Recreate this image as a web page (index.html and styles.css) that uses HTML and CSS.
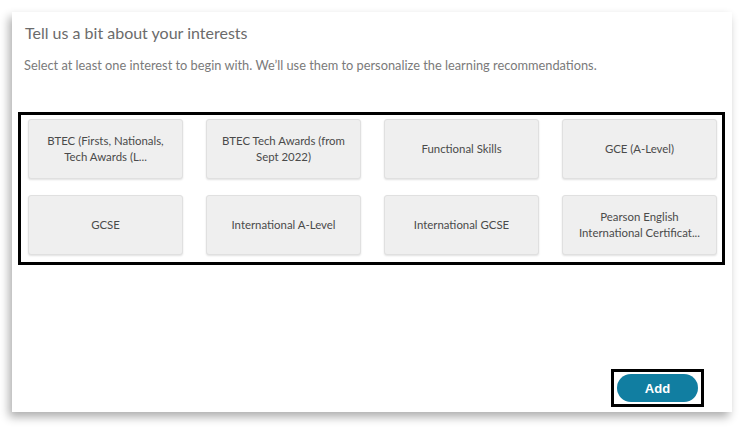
FILE: index.html
```html
<!DOCTYPE html>
<html lang="en">
<head>
<meta charset="utf-8">
<link rel="stylesheet" href="styles.css">
</head>
<body>
<div class="card">
  <h1 class="title">Tell us a bit about your interests</h1>
  <p class="subtitle">Select at least one interest to begin with. We’ll use them to personalize the learning recommendations.</p>
  <div class="grid-box">
    <div class="tile">BTEC (Firsts, Nationals, Tech Awards (L...</div>
    <div class="tile">BTEC Tech Awards (from Sept 2022)</div>
    <div class="tile">Functional Skills</div>
    <div class="tile">GCE (A-Level)</div>
    <div class="tile">GCSE</div>
    <div class="tile">International A-Level</div>
    <div class="tile">International GCSE</div>
    <div class="tile">Pearson English International Certificat...</div>
  </div>
  <div class="footer">
    <div class="add-frame"><button class="add-btn">Add</button></div>
  </div>
</div>
</body>
</html>
```
FILE: styles.css
```css
html, body {
  margin: 0;
  padding: 0;
  background: #ffffff;
}
body {
  font-family: "Lato", "Open Sans", sans-serif;
  min-height: 430px;
  padding: 12px 0 18px 12px;
  box-sizing: border-box;
}
.card {
  width: 720px;
  height: 400px;
  box-sizing: border-box;
  background: #ffffff;
  box-shadow: -3px 5px 9px rgba(0,0,0,0.32);
  display: flex;
  flex-direction: column;
}
.title {
  margin: 10px 0 0 13px;
  font-size: 16px;
  font-weight: 400;
  color: #6b6b6b;
  line-height: 22px;
}
.subtitle {
  margin: 12px 0 0 12px;
  font-size: 12.8px;
  color: #7a7a7a;
  line-height: 18px;
}
.grid-box {
  margin: 38px 0 0 6px;
  width: 707px;
  height: 153px;
  box-sizing: border-box;
  border: 3px solid #000000;
  padding: 4px 0 0 7px;
  display: grid;
  grid-template-columns: repeat(4, 155px);
  grid-auto-rows: 60px;
  column-gap: 23px;
  row-gap: 16px;
}
.tile {
  background: #efefef;
  border: 1px solid #e0e0e0;
  border-radius: 3px;
  box-shadow: 0 1px 2px rgba(0,0,0,0.12);
  display: flex;
  align-items: center;
  justify-content: center;
  text-align: center;
  padding: 0 9px;
  font-size: 11.4px;
  line-height: 16px;
  color: #4a4a4a;
  box-sizing: border-box;
}
.footer {
  margin-top: auto;
  display: flex;
  justify-content: flex-end;
  padding: 0 28px 5px 0;
}
.add-frame {
  border: 3px solid #000000;
  padding: 2px 3px;
  display: flex;
  background: #ffffff;
}
.add-btn {
  width: 81px;
  height: 28px;
  border: none;
  border-radius: 14px;
  background: #117ea1;
  color: #ffffff;
  font-family: "Liberation Sans", Arial, sans-serif;
  font-weight: 700;
  font-size: 13px;
  padding: 0;
}
```
